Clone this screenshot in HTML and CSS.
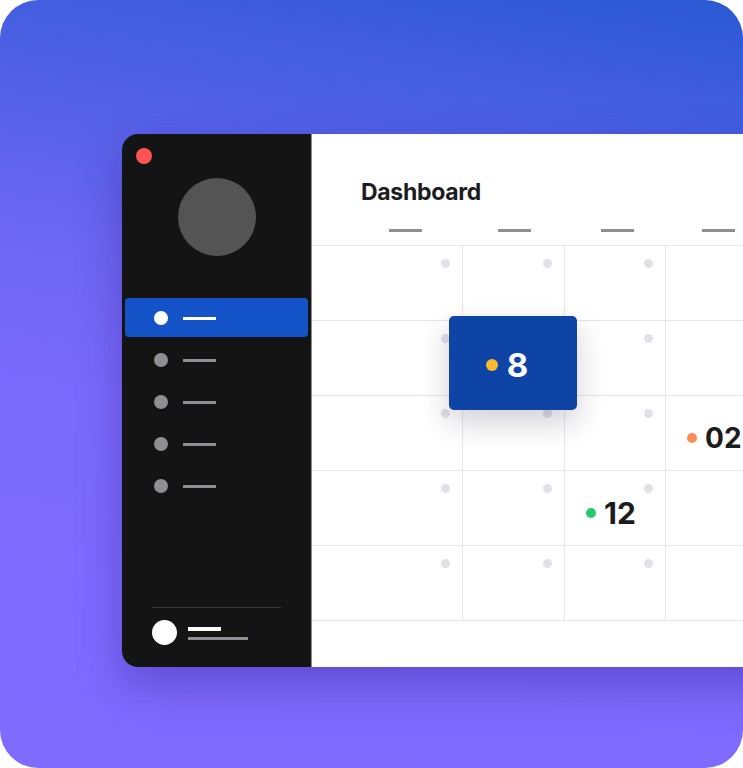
FILE: index.html
```html
<!DOCTYPE html>
<html lang="en">
<head>
<meta charset="utf-8">
<title>Dashboard</title>
<link rel="stylesheet" href="styles.css">
</head>
<body>
<div class="frame">
  <div class="window">
    <aside class="sidebar">
      <span class="close-dot"></span>
      <div class="avatar"></div>
      <nav class="nav">
        <div class="nav-item active"><span class="nav-dot"></span><span class="nav-line"></span></div>
        <div class="nav-item"><span class="nav-dot"></span><span class="nav-line"></span></div>
        <div class="nav-item"><span class="nav-dot"></span><span class="nav-line"></span></div>
        <div class="nav-item"><span class="nav-dot"></span><span class="nav-line"></span></div>
        <div class="nav-item"><span class="nav-dot"></span><span class="nav-line"></span></div>
      </nav>
      <div class="profile">
        <div class="sep"></div>
        <div class="profile-row">
          <span class="profile-avatar"></span>
          <div class="profile-lines"><span class="pl-name"></span><span class="pl-sub"></span></div>
        </div>
      </div>
    </aside>
    <main class="main">
      <h1 class="title">Dashboard</h1>
      <div class="weekdays"><span></span><span></span><span></span><span></span></div>
      <div class="calendar">
        <div class="cell"></div><div class="cell"></div><div class="cell"></div><div class="cell last"></div>
        <div class="cell"></div><div class="cell"></div><div class="cell"></div><div class="cell last"></div>
        <div class="cell"></div><div class="cell"></div><div class="cell"></div><div class="cell last"><span class="tag small"><i class="tag-dot orange"></i>02</span></div>
        <div class="cell"></div><div class="cell"></div><div class="cell"><span class="tag"><i class="tag-dot green"></i>12</span></div><div class="cell last"></div>
        <div class="cell"></div><div class="cell"></div><div class="cell"></div><div class="cell last"></div>
        <div class="popup"><span class="popup-dot"></span><span class="popup-num">8</span></div>
      </div>
    </main>
  </div>
</div>
</body>
</html>
```

FILE: styles.css
```css
html, body {
  margin: 0;
  padding: 0;
  background: #ffffff;
}
body {
  font-family: Inter, "Noto Sans", "Liberation Sans", sans-serif;
}
.frame {
  width: 743px;
  height: 768px;
  box-sizing: border-box;
  border-radius: 38px;
  overflow: hidden;
  padding: 134px 0 0 122px;
  background: linear-gradient(190deg, #2b59d3 0%, #4a5fe2 18%, #6d66f4 40%, #7c6afd 58%, #806bff 100%);
}
.window {
  width: 700px;
  height: 533px;
  display: flex;
  border-radius: 16px 0 0 16px;
  box-shadow: 0 18px 44px rgba(45, 25, 140, 0.38);
}
.sidebar {
  width: 190px;
  flex: 0 0 190px;
  box-sizing: border-box;
  background: #141414;
  border-right: 1px solid #8e8e93;
  border-radius: 16px 0 0 16px;
  display: flex;
  flex-direction: column;
  padding-top: 14px;
}
.close-dot {
  width: 16px;
  height: 16px;
  border-radius: 50%;
  background: #fe5454;
  margin-left: 14px;
}
.avatar {
  width: 78px;
  height: 78px;
  border-radius: 50%;
  background: #545454;
  margin: 14px auto 0;
}
.nav {
  margin-top: 42px;
  display: flex;
  flex-direction: column;
  gap: 3px;
}
.nav-item {
  height: 39px;
  margin: 0 3px;
  border-radius: 4px;
  display: flex;
  align-items: center;
  padding-left: 29px;
  gap: 15px;
}
.nav-item.active {
  background: #1453c7;
}
.nav-dot {
  width: 14px;
  height: 14px;
  border-radius: 50%;
  background: #8e8e93;
}
.nav-line {
  width: 33px;
  height: 3px;
  margin-top: 2px;
  background: #8e8e93;
}
.nav-item.active .nav-dot,
.nav-item.active .nav-line {
  background: #ffffff;
}
.profile {
  margin-top: auto;
  padding: 0 30px 22px;
}
.sep {
  height: 1px;
  background: #3a3a3c;
}
.profile-row {
  margin-top: 12px;
  display: flex;
  align-items: center;
  gap: 11px;
}
.profile-avatar {
  width: 25px;
  height: 25px;
  border-radius: 50%;
  background: #ffffff;
}
.profile-lines {
  display: flex;
  flex-direction: column;
  gap: 6px;
  margin-top: 2px;
}
.pl-name {
  width: 33px;
  height: 4px;
  background: #ffffff;
}
.pl-sub {
  width: 60px;
  height: 3px;
  background: #8e8e93;
}
.main {
  flex: 1;
  background: #ffffff;
  padding-top: 45px;
  overflow: hidden;
}
.title {
  margin: 0 0 0 49px;
  font-size: 23px;
  line-height: 27px;
  font-weight: 700;
  color: #1c1c1e;
  letter-spacing: -0.3px;
}
.weekdays {
  margin-top: 23px;
  height: 3px;
  display: flex;
}
.weekdays span {
  width: 33px;
  height: 3px;
  background: #8e8e93;
}
.weekdays span:nth-child(1) { margin-left: 77px; }
.weekdays span:nth-child(2) { margin-left: 76px; }
.weekdays span:nth-child(3) { margin-left: 70px; }
.weekdays span:nth-child(4) { margin-left: 68px; }
.calendar {
  position: relative;
  margin-top: 13px;
  border-top: 1px solid #e5e5ea;
  display: grid;
  grid-template-columns: 151px 102px 101px 102px 200px;
  grid-auto-rows: 75px;
}
.cell {
  position: relative;
  box-sizing: border-box;
  border-right: 1px solid #e5e5ea;
  border-bottom: 1px solid #e5e5ea;
  display: flex;
  align-items: center;
  padding: 10px 0 0 21px;
}
.cell::after {
  content: "";
  position: absolute;
  top: 13px;
  right: 12px;
  width: 9px;
  height: 9px;
  border-radius: 50%;
  background: #e0e2e7;
}
.cell.last {
  grid-column: span 2;
}
.cell.last::after {
  display: none;
}
.tag {
  display: inline-flex;
  align-items: center;
  gap: 8px;
  font-size: 30px;
  line-height: 1;
  font-weight: 700;
  color: #1c1c1e;
}
.tag.small {
  font-size: 28px;
}
.tag-dot {
  width: 10px;
  height: 10px;
  border-radius: 50%;
}
.tag-dot.orange { background: #fd8c5b; }
.tag-dot.green { background: #25c96a; }
.popup {
  position: absolute;
  left: 137px;
  top: 70px;
  width: 128px;
  height: 94px;
  box-sizing: border-box;
  border-radius: 5px;
  background: #0e44a6;
  box-shadow: 0 12px 30px rgba(20, 20, 50, 0.2);
  display: flex;
  align-items: center;
  justify-content: center;
  gap: 9px;
  padding: 4px 12px 0 0;
}
.popup-dot {
  width: 12px;
  height: 12px;
  border-radius: 50%;
  background: #fbbb30;
}
.popup-num {
  font-size: 33px;
  line-height: 1;
  font-weight: 700;
  color: #ffffff;
}
```
